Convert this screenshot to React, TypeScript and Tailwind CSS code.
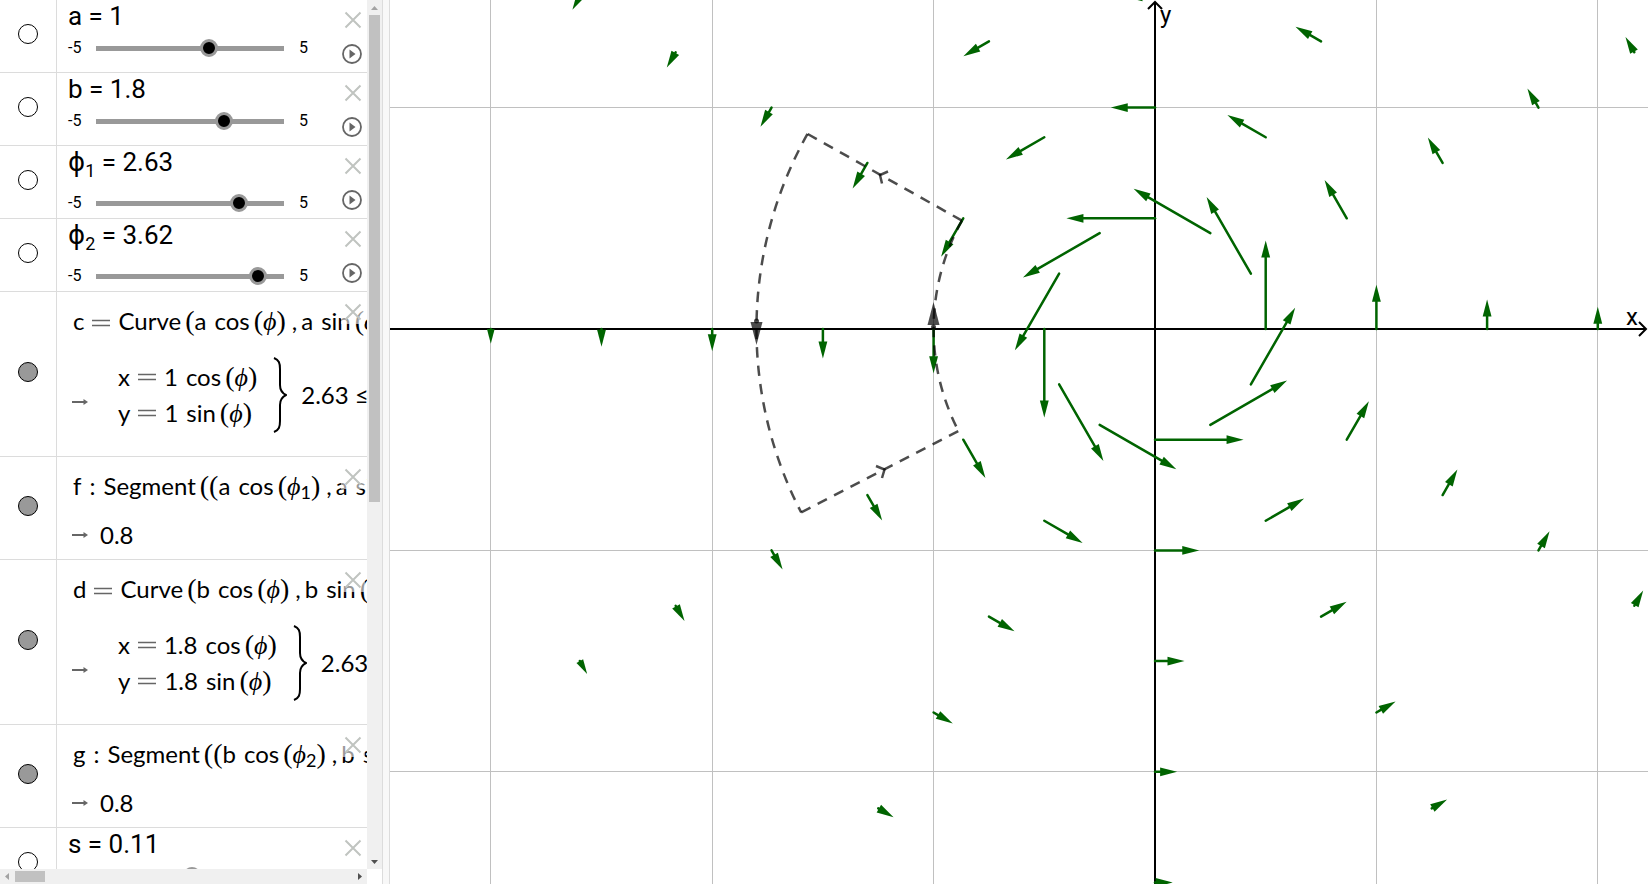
import React, { useState } from 'react';

const GREEN = '#006400';
const UNIT = 221.4;
const OX = 1155 - 390;
const OY = 329;

const px = (x: number) => OX + x * UNIT;
const py = (y: number) => OY - y * UNIT;

const CloseButton: React.FC<{ name: string }> = ({ name }) => (
  <button
    aria-label={`Delete ${name}`}
    className="absolute top-2 right-0.5 flex h-6 w-6 items-center justify-center bg-white/60"
  >
    <svg width="18" height="18" viewBox="0 0 18 18" stroke="#c0c4c0" strokeWidth="2">
      <path d="M1.5 1.5 16.5 16.5M16.5 1.5 1.5 16.5" />
    </svg>
  </button>
);

type RowProps = { name: string; shown?: boolean; height: string; children: React.ReactNode };

const Row: React.FC<RowProps> = ({ name, shown, height, children }) => (
  <div className={`flex shrink-0 border-b border-[#dcdcdc] ${height}`}>
    <div className="flex w-[57px] shrink-0 items-center justify-center border-r border-[#dcdcdc] pb-1">
      <input
        type="checkbox"
        defaultChecked={shown}
        aria-label={`Show ${name}`}
        className="h-5 w-5 appearance-none rounded-full border border-black bg-white checked:bg-[#999999]"
      />
    </div>
    <div className="relative min-w-0 flex-1 overflow-hidden">
      {children}
      <CloseButton name={name} />
    </div>
  </div>
);

type SliderProps = { label: string; sub?: string; initial: number };

const SliderRow: React.FC<SliderProps> = ({ label, sub, initial }) => {
  const [value, setValue] = useState(initial);

  return (
    <Row name={label + (sub ?? '')} height="h-[73px]">
      <div className={`pl-[11px] font-[Roboto,'DejaVu_Sans',sans-serif] text-black ${sub ? 'space-y-[9px]' : ''}`}>
        <div className="h-8 text-[26px] leading-8">
          {label}
          {sub && <sub className="bottom-[-6px] text-lg leading-none">{sub}</sub>} = {value}
        </div>
        <div className="flex h-8 items-center text-base">
          <span className="w-[19px]">-5</span>
          <input
            type="range"
            min={-5}
            max={5}
            step={0.01}
            value={value}
            aria-label={label + (sub ?? '')}
            onChange={(e) => setValue(Number(e.target.value))}
            className="h-[18px] w-[206px] appearance-none bg-[linear-gradient(#999,#999)] bg-[length:188px_5px] bg-center bg-no-repeat [&::-webkit-slider-thumb]:h-[18px] [&::-webkit-slider-thumb]:w-[18px] [&::-webkit-slider-thumb]:appearance-none [&::-webkit-slider-thumb]:rounded-full [&::-webkit-slider-thumb]:border-[3px] [&::-webkit-slider-thumb]:border-[#999] [&::-webkit-slider-thumb]:bg-black"
          />
          <span className="pl-1.5">5</span>
        </div>
      </div>
      <button aria-label={`Animate ${label}`} className="absolute right-[5px] bottom-2 h-5 w-5">
        <svg width="20" height="20" viewBox="0 0 20 20">
          <circle cx="10" cy="10" r="9" fill="none" stroke="#666" strokeWidth="1.8" />
          <path d="M7.5 5.5 13.5 10 7.5 14.5Z" fill="#666" />
        </svg>
      </button>
    </Row>
  );
};

// --- math text ---

const Phi: React.FC<{ sub?: string }> = ({ sub }) => (
  <span>
    <i className="font-['Liberation_Serif',serif] text-[26px] leading-none">ϕ</i>
    {sub && <sub className="bottom-[-4px] text-lg leading-none">{sub}</sub>}
  </span>
);

const Paren: React.FC<{ children: string }> = ({ children }) => (
  <span className="font-['Liberation_Serif',serif] text-[28px] leading-none">{children}</span>
);

const Call: React.FC<{ fn: string; sub?: string }> = ({ fn, sub }) => (
  <span className="flex items-baseline">
    <span className="mr-1">{fn}</span>
    <Paren>(</Paren>
    <Phi sub={sub} />
    <Paren>)</Paren>
  </span>
);

const Eq = () => (
  <svg
    width="18"
    height="8"
    viewBox="0 0 18 8"
    className="mx-2 shrink-0 self-center"
    stroke="#666"
    strokeWidth="1.5"
  >
    <path d="M0 1.5H18M0 6.5H18" />
  </svg>
);

const Arrow = () => (
  <svg width="16" height="8" viewBox="0 0 16 8" className="shrink-0">
    <path d="M0 4H13" stroke="#666" strokeWidth="2" />
    <path d="M11.5 1 16 4 11.5 7Z" fill="#666" />
  </svg>
);

const Brace = () => (
  <svg width="14" height="76" viewBox="0 0 14 76" fill="none" stroke="black" strokeWidth="2">
    <path d="M1 1C6 3 7 6 7 12V28C7 33 9 36 13 38C9 40 7 43 7 48V64C7 70 6 73 1 75" />
  </svg>
);

const mathText = 'whitespace-nowrap font-[Lato,sans-serif] text-2xl leading-9 text-black';

type CurveProps = { name: string; param: string; value: string };

const CurveRow: React.FC<CurveProps> = ({ name, param, value }) => (
  <Row name={name} shown height="h-[165px]">
    <div className={`flex h-[50px] items-baseline pt-[11px] pl-4 ${mathText}`}>
      {name}
      <Eq />
      <span className="mr-1">Curve</span>
      <Paren>(</Paren>
      <span className="mr-2">{param}</span>
      <Call fn="cos" />
      <span className="mr-1 ml-1.5">,</span>
      <span className="mr-2">{param}</span>
      <Call fn="sin" />
    </div>
    <div className={`flex items-center pt-[15px] pl-[15px] ${mathText}`}>
      <div className="mt-3.5 mr-[30px]">
        <Arrow />
      </div>
      <div>
        <div className="flex h-9 items-baseline">
          x<Eq />
          <span className="mr-2">{value}</span>
          <Call fn="cos" />
        </div>
        <div className="flex h-9 items-baseline">
          y<Eq />
          <span className="mr-2">{value}</span>
          <Call fn="sin" />
        </div>
      </div>
      <div className="mr-3.5 ml-4">
        <Brace />
      </div>
      <span className="mr-1.5">2.63</span>
      <span>≤ ϕ ≤ 3.62</span>
    </div>
  </Row>
);

type SegmentProps = { name: string; param: string; sub: string };

const SegmentRow: React.FC<SegmentProps> = ({ name, param, sub }) => (
  <Row name={name} shown height="h-[103px]">
    <div className={`flex h-[50px] items-baseline pt-[11px] pl-4 ${mathText}`}>
      {name}
      <span className="mx-2">:</span>
      <span className="mr-1">Segment</span>
      <Paren>((</Paren>
      <span className="mr-2">{param}</span>
      <Call fn="cos" sub={sub} />
      <span className="mr-1 ml-1.5">,</span>
      <span className="mr-2">{param}</span>
      <Call fn="sin" sub={sub} />
    </div>
    <div className={`flex items-center pt-[10px] pl-[15px] ${mathText}`}>
      <Arrow />
      <span className="ml-3">0.8</span>
    </div>
  </Row>
);

// --- graphics view ---

type Vec = { x: number; y: number; dx: number; dy: number; len: number };

// rotating field, strength falls off as 1/r
const field: Vec[] = [];
for (let k = 1; k <= 6; k++) {
  for (let n = 0; n < 12; n++) {
    const r = k / 2;
    const t = (n * Math.PI) / 6;
    field.push({
      x: px(r * Math.cos(t)),
      y: py(r * Math.sin(t)),
      dx: -Math.sin(t),
      dy: -Math.cos(t),
      len: (0.2 / r) * UNIT,
    });
  }
}

const FieldArrow: React.FC<{ v: Vec }> = ({ v }) => {
  const head = Math.min(17, v.len);
  const half = head * 0.26;
  const tx = v.x + v.dx * v.len;
  const ty = v.y + v.dy * v.len;
  const bx = tx - v.dx * head;
  const by = ty - v.dy * head;
  return (
    <g>
      <line x1={v.x} y1={v.y} x2={bx} y2={by} stroke={GREEN} strokeWidth="2.5" strokeLinecap="round" />
      <path
        d={`M${tx} ${ty}L${bx - v.dy * half} ${by + v.dx * half}L${bx + v.dy * half} ${by - v.dx * half}Z`}
        fill={GREEN}
      />
    </g>
  );
};

const PHI1 = 2.63;
const PHI2 = 3.62;

const polar = (r: number, t: number) => `${px(r * Math.cos(t))} ${py(r * Math.sin(t))}`;
const arc = (r: number) => `M${polar(r, PHI1)}A${r * UNIT} ${r * UNIT} 0 0 0 ${polar(r, PHI2)}`;

const GraphicsView = () => (
  <main className="min-w-0 flex-1 overflow-hidden pr-0.5">
    <svg width="100%" height="100%" role="img" aria-label="Vector field">
      <g stroke="#c0c0c0" strokeWidth="1" shapeRendering="crispEdges">
        {[-3, -2, -1, 1, 2].map((i) => (
          <line key={`v${i}`} x1={px(i)} x2={px(i)} y1="0" y2="100%" />
        ))}
        {[-2, -1, 1].map((i) => (
          <line key={`h${i}`} x1="0" x2="100%" y1={py(i)} y2={py(i)} />
        ))}
      </g>
      <g stroke="black" strokeWidth="2" fill="none">
        <path d={`M0 ${OY}H1256M1249 ${OY - 7}L1256 ${OY}L1249 ${OY + 7}`} />
        <path d={`M${OX} 884V2M${OX - 7} 9L${OX} 2L${OX + 7} 9`} />
      </g>
      <g className="font-[Roboto,sans-serif] text-2xl">
        <text x="770" y="23">y</text>
        <text x="1236" y="325">x</text>
      </g>
      {field.map((v, i) => (
        <FieldArrow key={i} v={v} />
      ))}
      <g stroke="black" strokeOpacity="0.7" strokeWidth="2.5" fill="none">
        <g strokeDasharray="10.4 8.1">
          <path d={arc(1)} />
          <path d={arc(1.8)} />
          <path d={`M${polar(1, PHI1)}L${polar(1.8, PHI1)}`} />
          <path d={`M${polar(1.8, PHI2)}L${polar(1, PHI2)}`} />
        </g>
        <path d="M498 171.5 490 175 492 183.5" />
        <path d="M486 466 494.5 469.5 492 478" />
      </g>
      <g fill="black" fillOpacity="0.7">
        <path d="M543.5 302 549.5 325H537.5Z" />
        <path d="M366.5 345 372.5 322H360.5Z" />
        <circle cx="543.5" cy="327" r="2.5" />
        <circle cx="366.5" cy="321" r="2.5" />
      </g>
    </svg>
  </main>
);

const AlgebraView = () => (
  <aside className="grid w-[382px] shrink-0 grid-cols-[367px_15px] grid-rows-[1fr_15px]">
    <div className="flex min-h-0 flex-col overflow-hidden bg-white">
      <SliderRow label="a" initial={1} />
      <SliderRow label="b" initial={1.8} />
      <SliderRow label="ϕ" sub="1" initial={2.63} />
      <SliderRow label="ϕ" sub="2" initial={3.62} />
      <CurveRow name="c" param="a" value="1" />
      <SegmentRow name="f" param="a" sub="1" />
      <CurveRow name="d" param="b" value="1.8" />
      <SegmentRow name="g" param="b" sub="2" />
      <SliderRow label="s" initial={0.11} />
    </div>
    <div className="flex flex-col items-center justify-between bg-[#f0f0f0]">
      <svg width="15" height="15" viewBox="0 0 15 15">
        <path d="M4 10 7.5 6 11 10Z" fill="#a3a3a3" />
      </svg>
      <div className="mb-auto h-[56%] w-[11px] bg-[#c1c1c1]" />
      <svg width="15" height="15" viewBox="0 0 15 15">
        <path d="M4 6 7.5 10 11 6Z" fill="#505050" />
      </svg>
    </div>
    <div className="flex items-center bg-[#f0f0f0]">
      <svg width="15" height="15" viewBox="0 0 15 15">
        <path d="M9 4 5 7.5 9 11Z" fill="#a3a3a3" />
      </svg>
      <div className="mr-auto h-[11px] w-[30px] bg-[#c1c1c1]" />
      <svg width="15" height="15" viewBox="0 0 15 15">
        <path d="M6 4 10 7.5 6 11Z" fill="#505050" />
      </svg>
    </div>
  </aside>
);

export default function App() {
  return (
    <div className="flex h-screen overflow-hidden bg-white pb-0.5">
      <AlgebraView />
      <div className="w-2 shrink-0 border-x border-[#dcdcdc] bg-[#f8f8f8]" />
      <GraphicsView />
    </div>
  );
}
